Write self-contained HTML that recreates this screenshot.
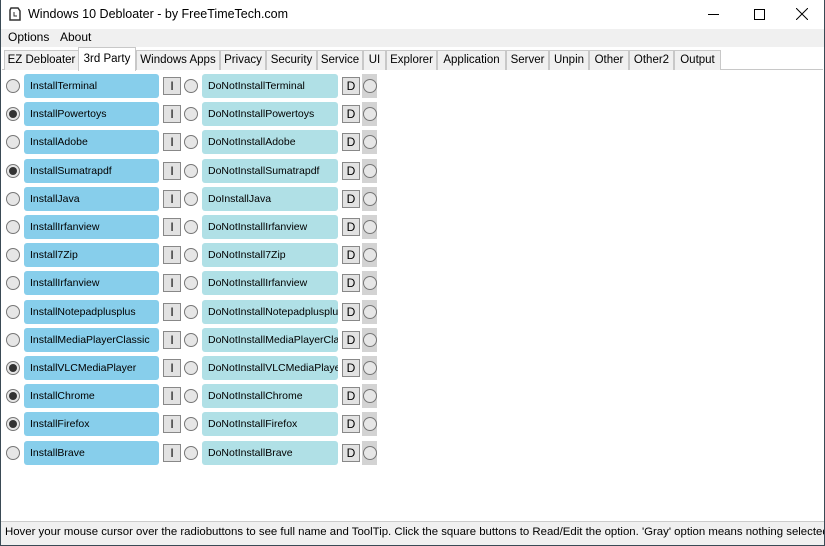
<!DOCTYPE html>
<html><head><style>
*{margin:0;padding:0;box-sizing:border-box}
body{width:825px;height:546px;overflow:hidden;background:#fff;font-family:"Segoe UI","Liberation Sans",sans-serif;font-size:12px;color:#000;position:relative}
.a{position:absolute}
.win{left:0;top:0;width:825px;height:546px;border:1px solid #3a4a55;border-top:none}
.title{left:28px;top:7px;font-size:12.5px}
.menu{left:1px;top:29px;width:823px;height:18px;background:#f0f0f0}
.tab{top:50px;height:20px;border:1px solid #c8c8c8;border-bottom:none;background:#f0f0f0;font-size:11.5px;text-align:center;line-height:18px;white-space:nowrap}
.sel{top:47px;height:24px;background:#fff;z-index:2;line-height:22px}
.line{left:2px;top:69px;width:821px;height:1px;background:#c8c8c8}
.rb{width:14px;height:14px;border:1px solid #777;border-radius:50%;background:#e6e6e6}
.rb.on::after{content:"";position:absolute;left:2px;top:2px;width:8px;height:8px;border-radius:50%;background:#333}
.b1{height:24px;background:#87ceeb;border-radius:3px;padding-left:6px;line-height:25px;font-size:10.5px}
.b2{height:24px;background:#b0e0e6;border-radius:3px;padding-left:6px;line-height:25px;font-size:10.5px;overflow:hidden;white-space:nowrap}
.sq{width:18px;height:18px;border:1px solid #888;background:#e2e2e2;text-align:center;line-height:16px;font-size:12px}
.gr{width:15px;height:24px;background:#d3d3d3}
.status{left:1px;top:521px;width:823px;height:24px;background:#f0f0f0;border-top:1px solid #ccc;padding-left:4px;line-height:20px;font-size:11.4px;white-space:nowrap;overflow:hidden}
</style></head><body>
<div class="a win"></div>
<svg class="a" style="left:8px;top:6px" width="14" height="16" viewBox="0 0 14 16"><path d="M3 2h7l2 3v9H2V4z" fill="none" stroke="#333" stroke-width="1.5"/><path d="M6 6v4h3" stroke="#333" fill="none"/></svg>
<div class="a title">Windows 10 Debloater - by FreeTimeTech.com</div>
<div class="a" style="left:708px;top:14px;width:11px;height:1px;background:#000"></div>
<div class="a" style="left:754px;top:9px;width:11px;height:11px;border:1px solid #000"></div>
<svg class="a" style="left:796px;top:8px" width="12" height="12"><path d="M0 0L12 12M12 0L0 12" stroke="#000"/></svg>
<div class="a menu"><span class="a" style="left:7px;top:1px">Options</span><span class="a" style="left:59px;top:1px">About</span></div>
<div class="a line"></div>
<div class="a tab" style="left:4px;width:75px">EZ Debloater</div>
<div class="a tab sel" style="left:78px;width:58px">3rd Party</div>
<div class="a tab" style="left:136px;width:84px">Windows Apps</div>
<div class="a tab" style="left:220px;width:46px">Privacy</div>
<div class="a tab" style="left:266px;width:51px">Security</div>
<div class="a tab" style="left:317px;width:46px">Service</div>
<div class="a tab" style="left:363px;width:23px">UI</div>
<div class="a tab" style="left:386px;width:51px">Explorer</div>
<div class="a tab" style="left:437px;width:69px">Application</div>
<div class="a tab" style="left:506px;width:43px">Server</div>
<div class="a tab" style="left:549px;width:40px">Unpin</div>
<div class="a tab" style="left:589px;width:40px">Other</div>
<div class="a tab" style="left:629px;width:45px">Other2</div>
<div class="a tab" style="left:674px;width:47px">Output</div>
<div id="rows"></div>
<script>
var L=[["InstallTerminal","DoNotInstallTerminal",0],["InstallPowertoys","DoNotInstallPowertoys",1],["InstallAdobe","DoNotInstallAdobe",0],["InstallSumatrapdf","DoNotInstallSumatrapdf",1],["InstallJava","DoInstallJava",0],["InstallIrfanview","DoNotInstallIrfanview",0],["Install7Zip","DoNotInstall7Zip",0],["InstallIrfanview","DoNotInstallIrfanview",0],["InstallNotepadplusplus","DoNotInstallNotepadplusplus",0],["InstallMediaPlayerClassic","DoNotInstallMediaPlayerClassic",0],["InstallVLCMediaPlayer","DoNotInstallVLCMediaPlayer",1],["InstallChrome","DoNotInstallChrome",1],["InstallFirefox","DoNotInstallFirefox",1],["InstallBrave","DoNotInstallBrave",0]];
var h="";
L.forEach(function(r,i){var t=Math.round(74+i*28.2);
h+='<div class="a rb'+(r[2]?' on':'')+'" style="left:6px;top:'+(t+5)+'px"></div>';
h+='<div class="a b1" style="left:24px;top:'+t+'px;width:135px">'+r[0]+'</div>';
h+='<div class="a sq" style="left:163px;top:'+(t+3)+'px">I</div>';
h+='<div class="a rb" style="left:184px;top:'+(t+5)+'px"></div>';
h+='<div class="a b2" style="left:202px;top:'+t+'px;width:136px">'+r[1]+'</div>';
h+='<div class="a sq" style="left:342px;top:'+(t+3)+'px">D</div>';
h+='<div class="a gr" style="left:362px;top:'+t+'px"></div>';
h+='<div class="a rb" style="left:363px;top:'+(t+5)+'px"></div>';
});
document.getElementById("rows").innerHTML=h;
</script>
<div class="a status">Hover your mouse cursor over the radiobuttons to see full name and ToolTip. Click the square buttons to Read/Edit the option. 'Gray' option means nothing selected</div>
</body></html>
